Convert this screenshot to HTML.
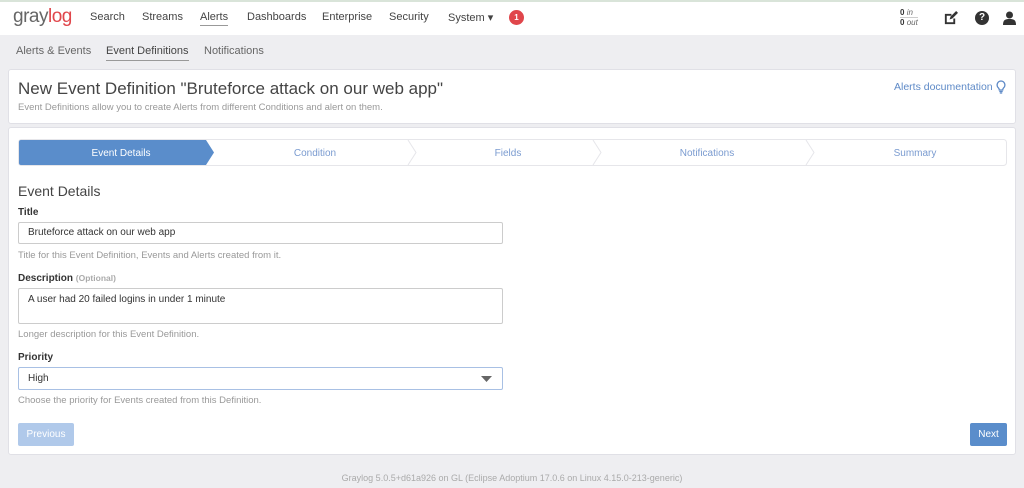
<!DOCTYPE html>
<html><head><meta charset="utf-8"><style>
*{box-sizing:border-box;margin:0;padding:0}
body{width:1024px;height:488px;background:#eeeef1;font-family:"Liberation Sans",sans-serif;position:relative;overflow:hidden;color:#333}
.abs{position:absolute}
.nav{left:0;top:0;width:1024px;height:35px;background:#fff;border-top:2px solid #d9e4d9}
.nav a{position:absolute;top:9px;font-size:11px;color:#444;text-decoration:none}
.logo{left:13px;top:4px;font-size:19px;color:#666;letter-spacing:-0.5px}
.logo span{color:#e0464b}
.sub a{position:absolute;top:45px;font-size:11px;color:#666}
.panel{background:#fff;border:1px solid #e0e0e6;border-radius:3px}
.lbl{font-size:10px;font-weight:bold;color:#333}
.inp{border:1px solid #ccc;border-radius:2px;background:#fff;font-size:10px;color:#333;padding-left:9px}
.help{font-size:9.5px;color:#999}
.btn{display:flex;align-items:center;justify-content:center;color:#fff;font-size:10px;border-radius:2px}
</style></head><body>
<div class="abs nav">
<div class="abs logo">gray<span>log</span></div>
<a style="left:90px">Search</a><a style="left:142px">Streams</a><a style="left:200px;border-bottom:1px solid #999;padding-bottom:2px">Alerts</a><a style="left:247px">Dashboards</a><a style="left:322px">Enterprise</a><a style="left:389px">Security</a><a style="left:448px">System ▾</a>
<div class="abs" style="left:509px;top:8px;width:15px;height:15px;border-radius:50%;background:#e0464b;color:#fff;font-size:8px;text-align:center;line-height:15px;font-weight:bold">1</div>
<div class="abs" style="left:900px;top:6px;font-size:8px;line-height:10px;color:#333"><b>0</b> <i style="color:#666">in</i><br><span style="border-top:1px solid #ccc"><b>0</b> <i style="color:#666">out</i></span></div>
<svg class="abs" style="left:943px;top:9px" width="15" height="15" viewBox="0 0 16 16"><path d="M2 3h7v2H4v7h7V8h2v6H2z" fill="#333"/><path d="M7 9l1-3 6-6 2 2-6 6z" fill="#333"/></svg>
<div class="abs" style="left:975px;top:9px;width:14px;height:14px;border-radius:50%;background:#333;color:#fff;font-size:10px;font-weight:bold;text-align:center;line-height:14px">?</div>
<svg class="abs" style="left:1003px;top:9px" width="13" height="14" viewBox="0 0 13 14"><circle cx="6.5" cy="4" r="3.5" fill="#333"/><path d="M0 14c0-5 2-6 6.5-6s6.5 1 6.5 6z" fill="#333"/></svg>
</div>
<div class="sub"><a style="left:16px">Alerts &amp; Events</a><a style="left:106px;color:#444;border-bottom:1px solid #999;padding-bottom:3px">Event Definitions</a><a style="left:204px">Notifications</a></div>
<div class="abs panel" style="left:8px;top:69px;width:1008px;height:55px">
<div class="abs" style="left:9px;top:9px;font-size:17px;color:#444">New Event Definition "Bruteforce attack on our web app"</div>
<div class="abs help" style="left:9px;top:32px">Event Definitions allow you to create Alerts from different Conditions and alert on them.</div>
<div class="abs" style="left:885px;top:11px;font-size:10.5px;color:#5e8ac7">Alerts documentation</div>
<svg class="abs" style="left:987px;top:10px" width="10" height="14" viewBox="0 0 10 14"><path d="M5 1a4 4 0 0 0-2.5 7c.6.6.8 1.2.8 2h3.4c0-.8.2-1.4.8-2A4 4 0 0 0 5 1z" fill="none" stroke="#5e8ac7" stroke-width="1.3"/><path d="M3.3 11.5h3.4M3.8 13h2.4" stroke="#5e8ac7" stroke-width="1.2"/></svg>
</div>
<div class="abs panel" style="left:8px;top:127px;width:1008px;height:328px">
<svg class="abs" style="left:9px;top:11px" width="990" height="28" viewBox="0 0 990 28">
<rect x="0.5" y="0.5" width="988" height="26" rx="3" fill="#fff" stroke="#e6e6ea"/>
<path d="M3 1H188L196 13.5L188 26H3Q1 26 1 24V3Q1 1 3 1z" fill="#5a8dcb"/>
<path d="M390 1L398 13.5L390 26M575 1L583 13.5L575 26M788 1L796 13.5L788 26" fill="none" stroke="#e6e6ea"/>
<g font-family="Liberation Sans" font-size="10" text-anchor="middle" fill="#7a9bd0"><text x="103" y="17" fill="#fff">Event Details</text><text x="297" y="17">Condition</text><text x="490" y="17">Fields</text><text x="689" y="17">Notifications</text><text x="897" y="17">Summary</text></g>
</svg>
<div class="abs" style="left:9px;top:55px;font-size:14px;color:#444">Event Details</div>
<div class="abs lbl" style="left:9px;top:79px">Title</div>
<div class="abs inp" style="left:9px;top:94px;width:485px;height:22px;line-height:20px">Bruteforce attack on our web app</div>
<div class="abs help" style="left:9px;top:122px">Title for this Event Definition, Events and Alerts created from it.</div>
<div class="abs lbl" style="left:9px;top:145px">Description <span style="color:#aaa;font-size:8.5px">(Optional)</span></div>
<div class="abs inp" style="left:9px;top:160px;width:485px;height:36px;padding-top:5px">A user had 20 failed logins in under 1 minute</div>
<div class="abs help" style="left:9px;top:201px">Longer description for this Event Definition.</div>
<div class="abs lbl" style="left:9px;top:224px">Priority</div>
<div class="abs inp" style="left:9px;top:239px;width:485px;height:23px;line-height:21px;border-color:#a8c0e4">High</div>
<svg class="abs" style="left:472px;top:248px" width="11" height="6" viewBox="0 0 11 6"><path d="M0 0h11L5.5 6z" fill="#666"/></svg>
<div class="abs help" style="left:9px;top:267px">Choose the priority for Events created from this Definition.</div>
<div class="abs btn" style="left:9px;top:295px;width:56px;height:23px;background:#b0c9ea">Previous</div>
<div class="abs btn" style="left:961px;top:295px;width:37px;height:23px;background:#5a8dcb">Next</div>
</div>
<div class="abs" style="left:0;width:1024px;top:473px;text-align:center;font-size:9px;color:#aaa">Graylog 5.0.5+d61a926 on GL (Eclipse Adoptium 17.0.6 on Linux 4.15.0-213-generic)</div>
</body></html>
